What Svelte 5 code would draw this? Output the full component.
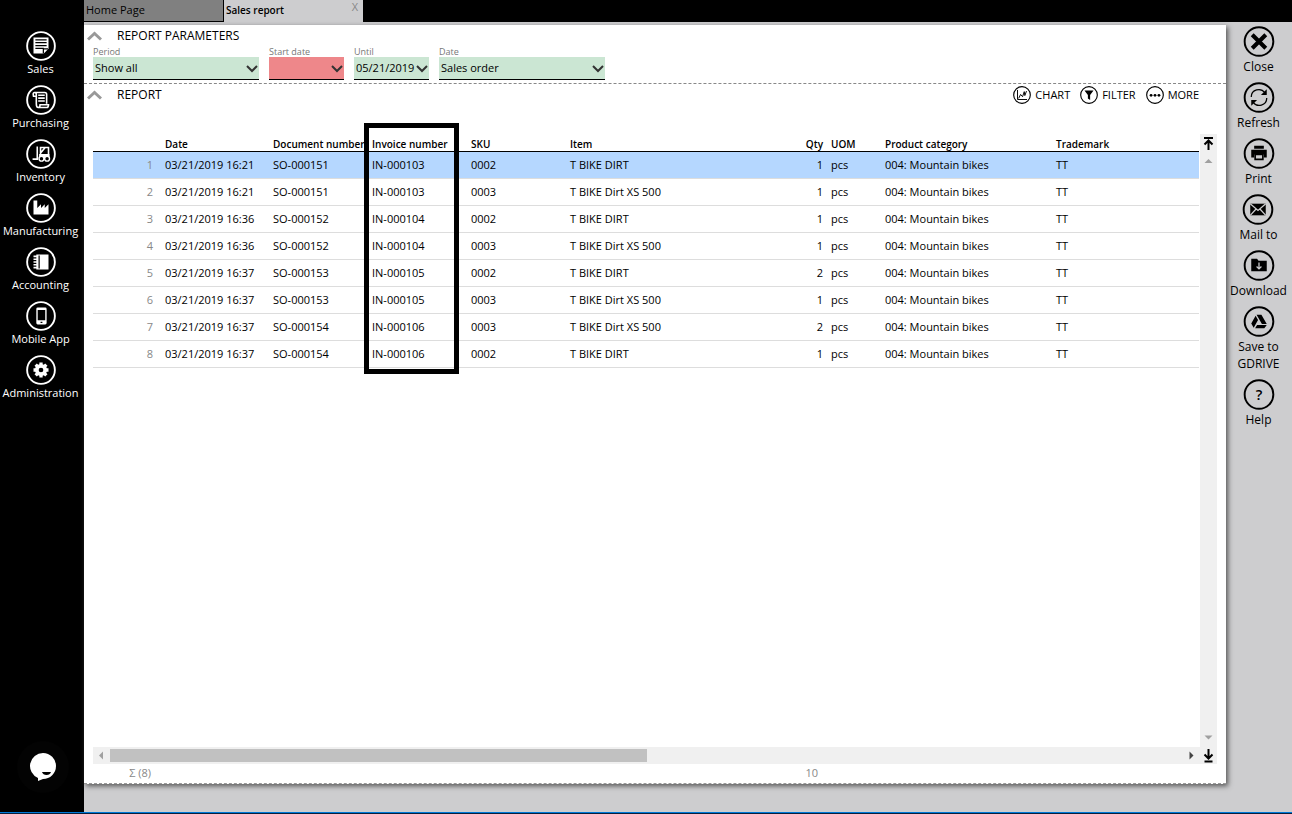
<script>
  const modules = ['Sales', 'Purchasing', 'Inventory', 'Manufacturing', 'Accounting', 'Mobile App', 'Administration'];
  const actions = ['Close', 'Refresh', 'Print', 'Mail to', 'Download', 'Save to GDRIVE', 'Help'];
  const tools = ['CHART', 'FILTER', 'MORE'];

  const fields = [
    { id: 'period', label: 'Period', value: 'Show all', size: 'wide' },
    { id: 'start', label: 'Start date', value: '', size: 'narrow', missing: true },
    { id: 'until', label: 'Until', value: '05/21/2019', size: 'narrow' },
    { id: 'date', label: 'Date', value: 'Sales order', size: 'wide' }
  ];

  const rows = [
    { date: '03/21/2019 16:21', doc: 'SO-000151', invoice: 'IN-000103', sku: '0002', item: 'T BIKE DIRT', qty: 1 },
    { date: '03/21/2019 16:21', doc: 'SO-000151', invoice: 'IN-000103', sku: '0003', item: 'T BIKE Dirt XS 500', qty: 1 },
    { date: '03/21/2019 16:36', doc: 'SO-000152', invoice: 'IN-000104', sku: '0002', item: 'T BIKE DIRT', qty: 1 },
    { date: '03/21/2019 16:36', doc: 'SO-000152', invoice: 'IN-000104', sku: '0003', item: 'T BIKE Dirt XS 500', qty: 1 },
    { date: '03/21/2019 16:37', doc: 'SO-000153', invoice: 'IN-000105', sku: '0002', item: 'T BIKE DIRT', qty: 2 },
    { date: '03/21/2019 16:37', doc: 'SO-000153', invoice: 'IN-000105', sku: '0003', item: 'T BIKE Dirt XS 500', qty: 1 },
    { date: '03/21/2019 16:37', doc: 'SO-000154', invoice: 'IN-000106', sku: '0003', item: 'T BIKE Dirt XS 500', qty: 2 },
    { date: '03/21/2019 16:37', doc: 'SO-000154', invoice: 'IN-000106', sku: '0002', item: 'T BIKE DIRT', qty: 1 }
  ];

  let selected = $state(0);
  let showParams = $state(true);
  let showReport = $state(true);
  let total = $derived(rows.reduce((sum, row) => sum + row.qty, 0));
</script>

{#snippet icon(name)}
  <svg class="icon" viewBox="0 0 32 32" aria-hidden="true">
    <circle cx="16" cy="16" r="14.8" fill="none" stroke="currentColor" stroke-width="2" />
    {#if name === 'Sales'}
      <path fill="currentColor" d="M8 7h16v12l-5 5H8z" />
      <path class="cut" d="M10 9.5h12M10 12.5h12M10 15.5h12M10 18.5h9M18.500 24v-5h5" />
    {:else if name === 'Purchasing'}
      <path class="line" d="M11 20V10q0-2-2-2t-1 4h3M9 8h11q2 0 2 2v10M13 24h9q2 0 2-3h-9q0 3-2 3t-2-4M13 11h7M13 14h7M13 17h7" />
    {:else if name === 'Inventory'}
      <path class="line" d="M7 21.500h5V8M15.500 18V9H24v9M15.500 15l5-6" />
      <path fill="currentColor" d="M14 16h11v5H14z" />
      <circle class="wheel" cx="16.500" cy="21" r="2.600" />
      <circle class="wheel" cx="22.500" cy="21" r="2.600" />
    {:else if name === 'Manufacturing'}
      <path fill="currentColor" d="M8 23V8h4v8l4-4v4l4-4v4l4-4v11z" />
    {:else if name === 'Accounting'}
      <path fill="currentColor" d="M11 8h13v16H11z" />
      <path class="line" d="M8 10h5M8 13h5M8 16h5M8 19h5M8 22h5" />
      <path class="cut" d="M14 9v14" />
    {:else if name === 'Mobile App'}
      <rect x="11" y="7" width="11" height="18" rx="1.500" fill="currentColor" />
      <path class="fill-cut" d="M12.500 9.500h8v11h-8zM15.500 22h2v1.500h-2z" />
    {:else if name === 'Administration'}
      <circle cx="16" cy="16" r="4.500" fill="none" stroke="currentColor" stroke-width="4" />
      <path stroke="currentColor" stroke-width="3.500" d="M16 8v3M16 21v3M8 16h3M21 16h3M10.300 10.300l2 2M19.700 19.700l2 2M10.300 21.700l2-2M19.700 12.300l2-2" />
    {:else if name === 'Close'}
      <path stroke="currentColor" stroke-width="4.200" d="M9 9l14 14M23 9L9 23" />
    {:else if name === 'Refresh'}
      <path class="thin" d="M8 15.500c0-8 10-10 14-4.500M24 16.500c0 8-10 10-14 4.500" />
      <path fill="currentColor" d="M24 7.500v6h-6zM8 24.500v-6h6z" />
    {:else if name === 'Print'}
      <path fill="currentColor" d="M11 8h10v3H11zM8 12h16v8h-3v-3H11v3H8z" />
      <path class="line" d="M12 17h8v5h-8z" />
    {:else if name === 'Mail to'}
      <path fill="currentColor" d="M8 10h16v12H8z" />
      <path class="cut" d="M8 10l8 7 8-7M8 22l6-6.500M24 22l-6-6.500" />
    {:else if name === 'Download'}
      <path fill="currentColor" d="M8 9h6l1.500 2H24v11H8z" />
      <path class="cut" d="M16 13v6M13.500 17l2.500 2.500 2.500-2.500" />
    {:else if name === 'Save to GDRIVE'}
      <path fill="currentColor" d="M13.500 9h5l5.500 9.500h-5zM12.500 10l2.500 4.500-4.500 8L8 18zM14 19.500h10L21.500 23H12z" />
    {:else if name === 'Help'}
      <text x="16" y="21.500" text-anchor="middle">?</text>
    {:else if name === 'CHART'}
      <path class="line" d="M8 7v17h17M10 22l3.500-7 3.500 4 3-9 1 7 3-8" />
    {:else if name === 'FILTER'}
      <path fill="currentColor" d="M8 8h16l-6 8v9l-4-3v-6z" />
    {:else if name === 'MORE'}
      <circle cx="9" cy="16.500" r="2.500" fill="currentColor" />
      <circle cx="16" cy="16.500" r="2.500" fill="currentColor" />
      <circle cx="23" cy="16.500" r="2.500" fill="currentColor" />
    {/if}
  </svg>
{/snippet}

{#snippet fold()}
  <svg viewBox="0 0 15 10" aria-hidden="true"><path d="M1 8.500l6.500-6 6.500 6" fill="none" stroke="#999" stroke-width="3" /></svg>
{/snippet}

<div class="shell">
  <div class="body">
    <nav class="modules">
      {#each modules as name}
        <a href="#{name}">{@render icon(name)}<span>{name}</span></a>
      {/each}
      <button class="chat" aria-label="Chat">
        <svg viewBox="0 0 28 28" aria-hidden="true">
          <path fill="#fff" d="M14 0a13 13 0 0 1 0 26L9 28V25A13 13 0 0 1 14 0z" />
          <path fill="#000" d="M13 19h9q-1 3-4.500 3T13 19z" />
        </svg>
      </button>
    </nav>

    <div class="main">
      <header class="tabs">
        <a class="tab" href="#home">Home Page</a>
        <div class="tab active">
          <a href="#report">Sales report</a>
          <button aria-label="Close tab">X</button>
        </div>
      </header>

      <div class="workspace">
        <main class="panel">
          <section class="params">
            <div class="title">
              <button class="fold" aria-label="Toggle parameters" onclick={() => (showParams = !showParams)}>{@render fold()}</button>
              <h2>REPORT PARAMETERS</h2>
            </div>
            {#if showParams}
              <div class="fields">
                {#each fields as field}
                  <div class="field {field.size}">
                    <label for={field.id}>{field.label}</label>
                    <div class="box" class:missing={field.missing}>
                      <select id={field.id}><option>{field.value}</option></select>
                      <svg viewBox="0 0 12 8" aria-hidden="true"><path d="M1 1l5 5 5-5" fill="none" stroke="#333" stroke-width="2" /></svg>
                    </div>
                  </div>
                {/each}
              </div>
            {/if}
          </section>

          <section class="report">
            <div class="title">
              <button class="fold" aria-label="Toggle report" onclick={() => (showReport = !showReport)}>{@render fold()}</button>
              <h2>REPORT</h2>
              <div class="tools">
                {#each tools as name}
                  <button>{@render icon(name)}{name}</button>
                {/each}
              </div>
            </div>

            {#if showReport}
              <div class="grid">
                <div class="sheet">
                  <table>
                    <colgroup>
                      <col class="c-num" /><col class="c-date" /><col class="c-code" /><col class="c-code" /><col class="c-code" />
                      <col class="c-item" /><col class="c-qty" /><col class="c-uom" /><col class="c-cat" /><col />
                    </colgroup>
                    <thead>
                      <tr>
                        <th></th><th>Date</th><th>Document number</th><th>Invoice number</th><th>SKU</th>
                        <th>Item</th><th class="qty">Qty</th><th>UOM</th><th>Product category</th><th>Trademark</th>
                      </tr>
                    </thead>
                    <tbody>
                      {#each rows as row, i}
                        <tr class:selected={i === selected} onclick={() => (selected = i)}>
                          <td class="num">{i + 1}</td>
                          <td>{row.date}</td>
                          <td>{row.doc}</td>
                          <td>{row.invoice}</td>
                          <td>{row.sku}</td>
                          <td>{row.item}</td>
                          <td class="qty">{row.qty}</td>
                          <td>pcs</td>
                          <td>004: Mountain bikes</td>
                          <td>TT</td>
                        </tr>
                      {/each}
                    </tbody>
                  </table>
                  <div class="highlight"></div>
                </div>

                <div class="vscroll">
                  <button aria-label="First row">
                    <svg viewBox="0 0 17 17"><path d="M4 4h9M8.500 16V7M4.500 10.500l4-4 4 4" fill="none" stroke="#000" stroke-width="2" /></svg>
                  </button>
                  <button aria-label="Scroll up"><svg viewBox="0 0 17 17"><path d="M4.500 12h8l-4-4z" fill="#a0a0a0" /></svg></button>
                  <span></span>
                  <button aria-label="Scroll down"><svg viewBox="0 0 17 17"><path d="M4.500 5.500h8l-4 4z" fill="#a0a0a0" /></svg></button>
                  <button aria-label="Last row">
                    <svg viewBox="0 0 17 17"><path d="M4.500 14.500h8M8.500 2v9M4.500 7.500l4 4 4-4" fill="none" stroke="#000" stroke-width="2" /></svg>
                  </button>
                </div>

                <div class="hscroll">
                  <button aria-label="Scroll left"><svg viewBox="0 0 17 17"><path d="M10 4.500v8l-4-4z" fill="#a0a0a0" /></svg></button>
                  <div class="track"><div class="thumb"></div></div>
                  <button aria-label="Scroll right"><svg viewBox="0 0 17 17"><path d="M6.500 4.500v8l4-4z" fill="#444" /></svg></button>
                </div>
              </div>
              <div class="totals"><span>Σ ({rows.length})</span><span>{total}</span></div>
            {/if}
          </section>
        </main>

        <aside class="actions">
          {#each actions as name}
            <button>{@render icon(name)}<span>{name}</span></button>
          {/each}
        </aside>
      </div>
    </div>
  </div>
  <footer></footer>
</div>

<style>
  :global(body) {
    margin: 0;
  }

  .shell {
    display: flex;
    flex-direction: column;
    min-height: 100vh;
    font-family: "Segoe UI", "Open Sans", "Noto Sans", sans-serif;
    font-size: 11px;
    line-height: 16px;
    color: #000;
    background: #cdcdcf;
  }

  .shell * {
    box-sizing: border-box;
  }

  button {
    padding: 0;
    border: 0;
    background: none;
    font: inherit;
    color: inherit;
    cursor: pointer;
  }

  a {
    color: inherit;
    text-decoration: none;
  }

  svg {
    display: block;
  }

  .body {
    flex: 1;
    display: flex;
  }

  footer {
    height: 2px;
    background: #06213f;
    border-top: 1px solid #0078d7;
  }

  .line {
    fill: none;
    stroke: currentColor;
    stroke-width: 1.7;
  }

  .thin {
    fill: none;
    stroke: currentColor;
    stroke-width: 1.3;
  }

  .cut {
    fill: none;
    stroke: var(--back);
    stroke-width: 1.3;
  }

  .fill-cut {
    fill: var(--back);
  }

  .wheel {
    fill: var(--back);
    stroke: currentColor;
    stroke-width: 1.5;
  }

  .modules {
    --back: #000;
    display: flex;
    flex-direction: column;
    gap: 8px;
    width: 84px;
    padding: 31px 3px 19px 0;
    background: #000;
    color: #fff;
    font-weight: 500;
  }

  .modules a {
    display: flex;
    flex-direction: column;
    align-items: center;
    white-space: nowrap;
  }

  .modules .icon {
    width: 32px;
    height: 30px;
  }

  .chat {
    display: flex;
    align-items: center;
    justify-content: center;
    width: 52px;
    height: 52px;
    margin: auto auto 0 17px;
    border-radius: 50%;
    background: #030303;
  }

  .chat svg {
    width: 28px;
    height: 28px;
  }

  .main {
    flex: 1;
    min-width: 0;
    display: flex;
    flex-direction: column;
  }

  .tabs {
    display: flex;
    height: 22px;
    background: #000;
  }

  .tab {
    display: flex;
    justify-content: space-between;
    width: 139px;
    height: 21px;
    padding: 2px;
    background: #808080;
  }

  .tab.active {
    height: 22px;
    margin-left: 1px;
    padding-right: 5px;
    background: #cdcdcf;
  }

  .active a {
    font-size: 10px;
    font-weight: 600;
  }

  .tab button {
    line-height: 8px;
    height: 10px;
    color: #888;
  }

  .workspace {
    flex: 1;
    display: flex;
    padding: 3px 0 28px;
  }

  .panel {
    flex: 1;
    min-width: 0;
    display: flex;
    flex-direction: column;
    background: #fff;
    border-bottom: 1px dashed #999;
    box-shadow: 2px 2px 5px #555;
  }

  .params {
    padding-bottom: 3px;
    border-bottom: 1px dashed #888;
  }

  .title {
    display: flex;
    align-items: center;
    height: 22px;
    padding: 0 27px 0 3px;
  }

  .fold svg {
    width: 15px;
    height: 10px;
  }

  h2 {
    margin: 0 auto 0 15px;
    font-size: 12px;
    font-weight: 500;
  }

  .fields {
    display: flex;
    gap: 10px;
    padding: 0 9px;
  }

  .wide {
    width: 166px;
  }

  .narrow {
    width: 75px;
  }

  label {
    display: block;
    font-size: 9px;
    line-height: 10px;
    color: #777;
  }

  .box {
    position: relative;
    height: 23px;
    background: #cbe6d3;
    border-bottom: 1px solid #000;
  }

  .missing {
    background: #ee878a;
  }

  .box svg {
    position: absolute;
    right: 1px;
    top: 8px;
    width: 12px;
    height: 8px;
    pointer-events: none;
  }

  select {
    width: 100%;
    height: 22px;
    padding: 0 0 0 2px;
    border: 0;
    background: none;
    appearance: none;
    font: inherit;
    color: inherit;
  }

  .report {
    flex: 1;
    display: flex;
    flex-direction: column;
  }

  .tools {
    display: flex;
    gap: 10px;
  }

  .tools button {
    display: flex;
    align-items: center;
    gap: 4px;
  }

  .tools .icon {
    width: 18px;
    height: 18px;
  }

  .grid {
    flex: 1;
    display: grid;
    grid-template-columns: 1fr 17px;
    grid-template-rows: 1fr 17px;
    padding: 28px 9px 0;
  }

  .sheet {
    position: relative;
  }

  table {
    width: 100%;
    table-layout: fixed;
    border-collapse: separate;
    border-spacing: 0;
    padding-right: 1px;
  }

  .c-num {
    width: 68px;
  }

  .c-date {
    width: 108px;
  }

  .c-code {
    width: 99px;
  }

  .c-item {
    width: 211px;
  }

  .c-qty {
    width: 50px;
  }

  .c-uom {
    width: 54px;
  }

  .c-cat {
    width: 171px;
  }

  th,
  td {
    padding: 0 4px;
    text-align: left;
    white-space: nowrap;
  }

  th {
    height: 18px;
    padding-top: 3px;
    border-bottom: 1px solid #000;
    font-size: 10px;
    line-height: 14px;
    font-weight: 600;
  }

  td {
    height: 27px;
    border-bottom: 1px solid #ddd;
  }

  .selected td {
    background: #b5d7ff;
  }

  .num {
    padding-right: 8px;
    text-align: right;
    color: #888;
  }

  .qty {
    text-align: right;
  }

  /* frame laid over the invoice number column */
  .highlight {
    position: absolute;
    left: 271px;
    top: -11px;
    width: 95px;
    height: 251px;
    border: 5px solid #000;
    pointer-events: none;
  }

  .vscroll {
    grid-row: span 2;
    display: flex;
    flex-direction: column;
    background: #f0f0f0;
  }

  .vscroll span {
    flex: 1;
  }

  .vscroll svg,
  .hscroll svg {
    width: 17px;
    height: 17px;
  }

  .hscroll {
    display: flex;
    background: #f0f0f0;
  }

  .track {
    flex: 1;
    padding: 2px 0;
  }

  .thumb {
    width: 50%;
    height: 13px;
    background: #c1c1c1;
  }

  .totals {
    display: grid;
    grid-template-columns: 58px 667px;
    height: 19px;
    padding: 1px 9px 0;
    text-align: right;
    color: #888;
  }

  .actions {
    --back: #cdcdcf;
    display: flex;
    flex-direction: column;
    align-items: center;
    gap: 7px;
    width: 66px;
    padding: 1px 1px 0 0;
    font-size: 12px;
    line-height: 17px;
  }

  .actions button {
    display: flex;
    flex-direction: column;
    align-items: center;
    gap: 1px;
    max-width: 60px;
  }

  .actions .icon {
    width: 32px;
    height: 31px;
  }

  .icon text {
    fill: currentColor;
    font-size: 15px;
    font-weight: 600;
  }
</style>
